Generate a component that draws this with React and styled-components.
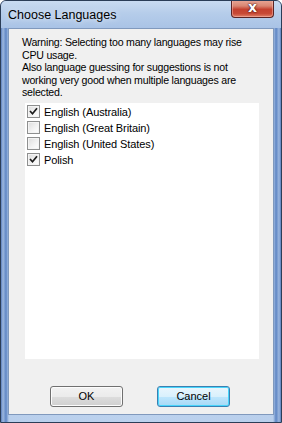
import { useState } from 'react';
import styled, { createGlobalStyle } from 'styled-components';

const GlobalStyle = createGlobalStyle`
  html, body {
    margin: 0;
    padding: 0;
    background: #ffffff;
  }
  body {
    font-family: 'Liberation Sans', Arial, sans-serif;
  }
`;

const languages = [
  { id: 'en-AU', text: 'English (Australia)', checked: true },
  { id: 'en-GB', text: 'English (Great Britain)', checked: false },
  { id: 'en-US', text: 'English (United States)', checked: false },
  { id: 'pl', text: 'Polish', checked: true },
];

const CheckMark = () => (
  <svg width='9' height='9' viewBox='0 0 9 9'>
    <path d='M1 4 L3.5 6.8 L8 1.2' fill='none' stroke='#1c1c1c' strokeWidth='1.7' />
  </svg>
);

const App = () => {
  const [items, setItems] = useState(languages);

  const toggle = (id) => {
    setItems(items.map((item) => (item.id === id ? { ...item, checked: !item.checked } : item)));
  };

  return (
    <>
      <GlobalStyle />
      <Window>
        <TitleBar>
          <Title>Choose Languages</Title>
          <CloseButton>x</CloseButton>
        </TitleBar>
        <Client>
          <Warning>
            Warning: Selecting too many languages may rise
            <br />
            CPU usage.
            <br />
            Also language guessing for suggestions is not
            <br />
            working very good when multiple languages are
            <br />
            selected.
          </Warning>
          <ListBox>
            {items.map((item) => (
              <Item key={item.id} onClick={() => toggle(item.id)}>
                <CheckBox>{item.checked && <CheckMark />}</CheckBox>
                {item.text}
              </Item>
            ))}
          </ListBox>
          <ButtonRow>
            <Button>OK</Button>
            <Button $focused>Cancel</Button>
          </ButtonRow>
        </Client>
      </Window>
    </>
  );
};

const Window = styled.div`
  width: 282px;
  height: 423px;
  box-sizing: border-box;
  display: flex;
  flex-direction: column;
  border: 1px solid #2b3d57;
  border-radius: 6px 6px 0 0;
  background: linear-gradient(
    90deg,
    #5b7fbd 0px,
    #9db8df 2px,
    #5f86c4 5px,
    #b9cfec 8px,
    #bcd2ee 50%,
    #b9cfec calc(100% - 8px),
    #5f86c4 calc(100% - 5px),
    #9db8df calc(100% - 2px),
    #5b7fbd 100%
  );
  overflow: hidden;
`;

const TitleBar = styled.div`
  height: 27px;
  flex-shrink: 0;
  display: flex;
  align-items: flex-start;
  justify-content: space-between;
  background: linear-gradient(180deg, #c9dbf1 0%, #b6cdea 45%, #a9c3e6 100%);
`;

const Title = styled.span`
  font-family: 'Liberation Sans', Arial, sans-serif;
  font-size: 12.5px;
  color: #000;
  padding: 7px 0 0 7px;
  text-shadow: 0 0 6px rgba(255, 255, 255, 0.9);
`;

const CloseButton = styled.div`
  width: 43px;
  height: 18px;
  margin-right: 7px;
  margin-top: -1px;
  box-sizing: border-box;
  border: 1px solid #5a2424;
  border-top: none;
  border-radius: 0 0 4px 4px;
  background: linear-gradient(180deg, #e9a897 0%, #d98672 35%, #c4412f 55%, #c84a36 80%, #e0816a 100%);
  box-shadow: inset 0 0 0 1px rgba(255, 200, 190, 0.45);
  color: #fff;
  font-family: 'DejaVu Sans', sans-serif;
  font-weight: bold;
  font-size: 14px;
  line-height: 15px;
  text-align: center;
  text-shadow: 0 0 1px #3a1010, 0 0 2px #3a1010;
`;

const Client = styled.div`
  flex: 1;
  margin: 0 7px 7px;
  display: flex;
  flex-direction: column;
  background: #f0f0f0;
  border: 1px solid #8099bd;
  padding: 7px 14px 0 13px;
`;

const Warning = styled.p`
  margin: 0;
  font-size: 10.6px;
  letter-spacing: -0.22px;
  line-height: 12.5px;
  white-space: nowrap;
  color: #000;
`;

const ListBox = styled.div`
  margin: 4px 0 0 3px;
  height: 255px;
  background: #fff;
  padding-top: 1px;
`;

const Item = styled.div`
  display: flex;
  align-items: center;
  gap: 4px;
  height: 16px;
  padding-left: 2px;
  font-size: 11px;
  letter-spacing: -0.1px;
  color: #000;
  cursor: default;
`;

const CheckBox = styled.span`
  width: 13px;
  height: 13px;
  box-sizing: border-box;
  border: 1px solid #8e8f8f;
  background: linear-gradient(135deg, #dcdcdc 0%, #f4f4f4 60%, #ffffff 100%);
  box-shadow: inset 0 0 0 1px #f4f4f4;
  display: flex;
  align-items: center;
  justify-content: center;
`;

const ButtonRow = styled.div`
  display: flex;
  justify-content: center;
  gap: 34px;
  margin-top: 27px;
  margin-left: -1px;
`;

const Button = styled.button`
  width: 73px;
  height: 21px;
  padding: 0;
  font-family: 'Liberation Sans', Arial, sans-serif;
  font-size: 11px;
  color: #000;
  border-radius: 3px;
  border: 1px solid ${(p) => (p.$focused ? '#3c7fb1' : '#707070')};
  background: ${(p) =>
    p.$focused
      ? 'linear-gradient(180deg, #eaf6fd 0%, #d9f0fc 50%, #bee6fd 50%, #a7d9f5 100%)'
      : 'linear-gradient(180deg, #f2f2f2 0%, #ebebeb 50%, #dddddd 50%, #cfcfcf 100%)'};
  box-shadow: inset 0 0 0 1px ${(p) => (p.$focused ? '#48d5fb' : '#fcfcfc')};
`;

export default App;
